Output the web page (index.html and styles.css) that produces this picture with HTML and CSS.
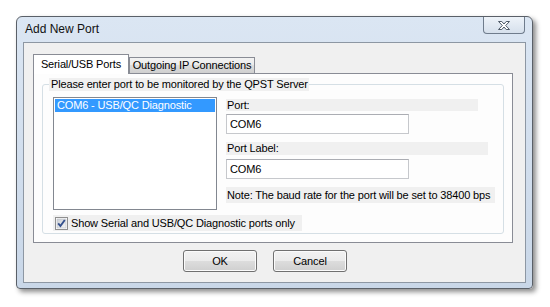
FILE: index.html
```html
<!DOCTYPE html>
<html lang="en">
<head>
    <meta charset="UTF-8">
    <meta name="viewport" content="width=device-width, initial-scale=1.0">
    <title>Add New Port</title>
    <link rel="stylesheet" href="styles.css">
</head>
<body>
    <div class="window">
        <div class="titlebar">
            <span class="title">Add New Port</span>
            <button class="close-btn" aria-label="Close">
                <svg width="14" height="11" viewBox="0 0 14 11">
                    <path d="M1.5 1.5 H4.8 L7 4 L9.2 1.5 H12.5 L8.7 5.5 L12.5 9.5 H9.2 L7 7 L4.8 9.5 H1.5 L5.3 5.5 Z" fill="#fff" stroke="#4f5a68" stroke-width="1" stroke-linejoin="round"/>
                </svg>
            </button>
        </div>

        <div class="client">
            <div class="tabs">
                <div class="tab active">Serial/USB Ports</div>
                <div class="tab">Outgoing IP Connections</div>
            </div>

            <div class="tab-panel">
                <fieldset class="group">
                    <legend>Please enter port to be monitored by the QPST Server</legend>
                    <div class="group-body">
                        <ul class="port-list">
                            <li class="selected">COM6 - USB/QC Diagnostic</li>
                        </ul>
                        <div class="fields">
                            <div class="field-label label-port">Port:</div>
                            <input class="text-input" type="text" value="COM6">
                            <div class="field-label label-name">Port Label:</div>
                            <input class="text-input input-name" type="text" value="COM6">
                            <div class="note">Note: The baud rate for the port will be set to 38400 bps</div>
                        </div>
                    </div>
                    <label class="check-row">
                        <span class="checkbox">
                            <svg width="13" height="13" viewBox="0 0 13 13">
                                <defs>
                                    <linearGradient id="cbfill" x1="0" y1="0" x2="1" y2="1">
                                        <stop offset="0" stop-color="#cbcfd5"/>
                                        <stop offset="1" stop-color="#f6f6f6"/>
                                    </linearGradient>
                                </defs>
                                <rect x="0.5" y="0.5" width="12" height="12" fill="#fff" stroke="#8f8f8f"/>
                                <rect x="2" y="2" width="9" height="9" fill="url(#cbfill)" stroke="#b8bcc3" stroke-width="0.6"/>
                                <path d="M3.2 6.4 L5.4 9 L9.8 3" fill="none" stroke="#34508d" stroke-width="1.9"/>
                            </svg>
                        </span>
                        Show Serial and USB/QC Diagnostic ports only
                    </label>
                </fieldset>
            </div>

            <div class="buttons">
                <button class="btn">OK</button>
                <button class="btn">Cancel</button>
            </div>
        </div>
    </div>
</body>
</html>
```

FILE: styles.css
```css
body {
    margin: 0;
    padding: 16px 0 0 16px;
    width: 550px;
    height: 307px;
    box-sizing: border-box;
    overflow: hidden;
    background: #fff;
    font-family: "Liberation Sans", Arial, sans-serif;
    font-size: 11px;
    letter-spacing: -0.15px;
    color: #000;
}

.window {
    box-sizing: border-box;
    width: 517px;
    height: 273px;
    border: 1px solid #5a6068;
    border-radius: 6px 6px 4px 4px;
    background: linear-gradient(#dbe6f3, #c9d7e8);
    padding: 0 6px 5px 6px;
    display: flex;
    flex-direction: column;
    box-shadow: 3px 3px 5px rgba(0, 0, 0, 0.45);
}

.titlebar {
    height: 25px;
    display: flex;
    justify-content: space-between;
    align-items: flex-start;
}

.title {
    font-size: 12px;
    letter-spacing: 0;
    line-height: 14px;
    margin: 5px 0 0 2px;
    color: #111;
}

.close-btn {
    box-sizing: border-box;
    width: 42px;
    height: 17px;
    margin-right: 1px;
    padding: 0;
    border: 1px solid #6f7c8c;
    border-top: none;
    border-radius: 0 0 4px 4px;
    background: linear-gradient(#eef3f9, #d6e0ec);
    display: flex;
    align-items: center;
    justify-content: center;
}

.client {
    flex: 1;
    border: 1px solid #8d97a3;
    background: #f0f0f0;
    padding: 11px 0 0 9px;
}

.tabs {
    display: flex;
    align-items: flex-end;
    height: 19px;
    position: relative;
    z-index: 1;
}

.tab {
    box-sizing: border-box;
    height: 16px;
    width: 126px;
    border: 1px solid #898c95;
    border-bottom: none;
    background: linear-gradient(#f2f2f2, #ebebeb 50%, #dddddd 50%, #cfcfcf);
    line-height: 13px;
    padding-top: 1px;
    text-align: center;
    white-space: nowrap;
}

.tab.active {
    width: 96px;
    height: 20px;
    margin-bottom: -1px;
    padding-top: 3px;
    background: #fff;
}

.tab-panel {
    box-sizing: border-box;
    width: 480px;
    height: 170px;
    border: 1px solid #898c95;
    background: #fdfdfd;
}

.group {
    box-sizing: border-box;
    width: 462px;
    margin: 4px 0 0 8px;
    padding: 0 8px 2px 10px;
    border: 1px solid #d5dfe5;
    border-radius: 3px;
    min-inline-size: 0;
}

.group legend {
    background: #f0f0f0;
    padding: 0 1px 0 2px;
    margin-left: -4px;
    line-height: 13px;
}

.group-body {
    display: flex;
    gap: 9px;
    margin-top: 6px;
}

.port-list {
    box-sizing: border-box;
    width: 171px;
    height: 113px;
    margin: 0;
    padding: 1px;
    list-style: none;
    border: 1px solid #828790;
    background: #fff;
}

.port-list li {
    height: 13px;
    line-height: 13px;
    padding-left: 2px;
}

.port-list li.selected {
    background: #3399ff;
    color: #fff;
}

.fields {
    display: flex;
    flex-direction: column;
    align-items: flex-start;
}

.field-label {
    background: #f0f0f0;
    padding-left: 1px;
}

.label-port {
    width: 251px;
    height: 12px;
    line-height: 12px;
    margin-top: 2px;
}

.label-name {
    width: 261px;
    height: 13px;
    line-height: 13px;
    margin-top: 8px;
}

.text-input {
    box-sizing: border-box;
    width: 183px;
    height: 20px;
    margin: 3px 0 0 0;
    padding: 0 3px;
    border: 1px solid #c6c8cc;
    border-top-color: #abadb3;
    background: #fff;
    font: inherit;
    letter-spacing: inherit;
    color: #000;
}

.input-name {
    margin-top: 4px;
}

.note {
    box-sizing: border-box;
    width: 269px;
    height: 16px;
    line-height: 16px;
    margin-top: 8px;
    padding-left: 1px;
    background: #f0f0f0;
    white-space: nowrap;
}

.check-row {
    box-sizing: border-box;
    display: flex;
    align-items: center;
    width: 249px;
    height: 16px;
    margin-top: 5px;
    background: #f0f0f0;
    white-space: nowrap;
}

.checkbox {
    display: flex;
    margin: 0 3px 0 2px;
}

.buttons {
    display: flex;
    gap: 16px;
    margin: 7px 0 0 150px;
}

.btn {
    box-sizing: border-box;
    width: 74px;
    height: 22px;
    padding: 0;
    border: 1px solid #707070;
    border-radius: 3px;
    background: linear-gradient(#f2f2f2, #ebebeb 50%, #dddddd 50%, #cfcfcf);
    box-shadow: inset 0 0 0 1px #fbfbfb;
    font: inherit;
    letter-spacing: inherit;
    color: #000;
}
```
